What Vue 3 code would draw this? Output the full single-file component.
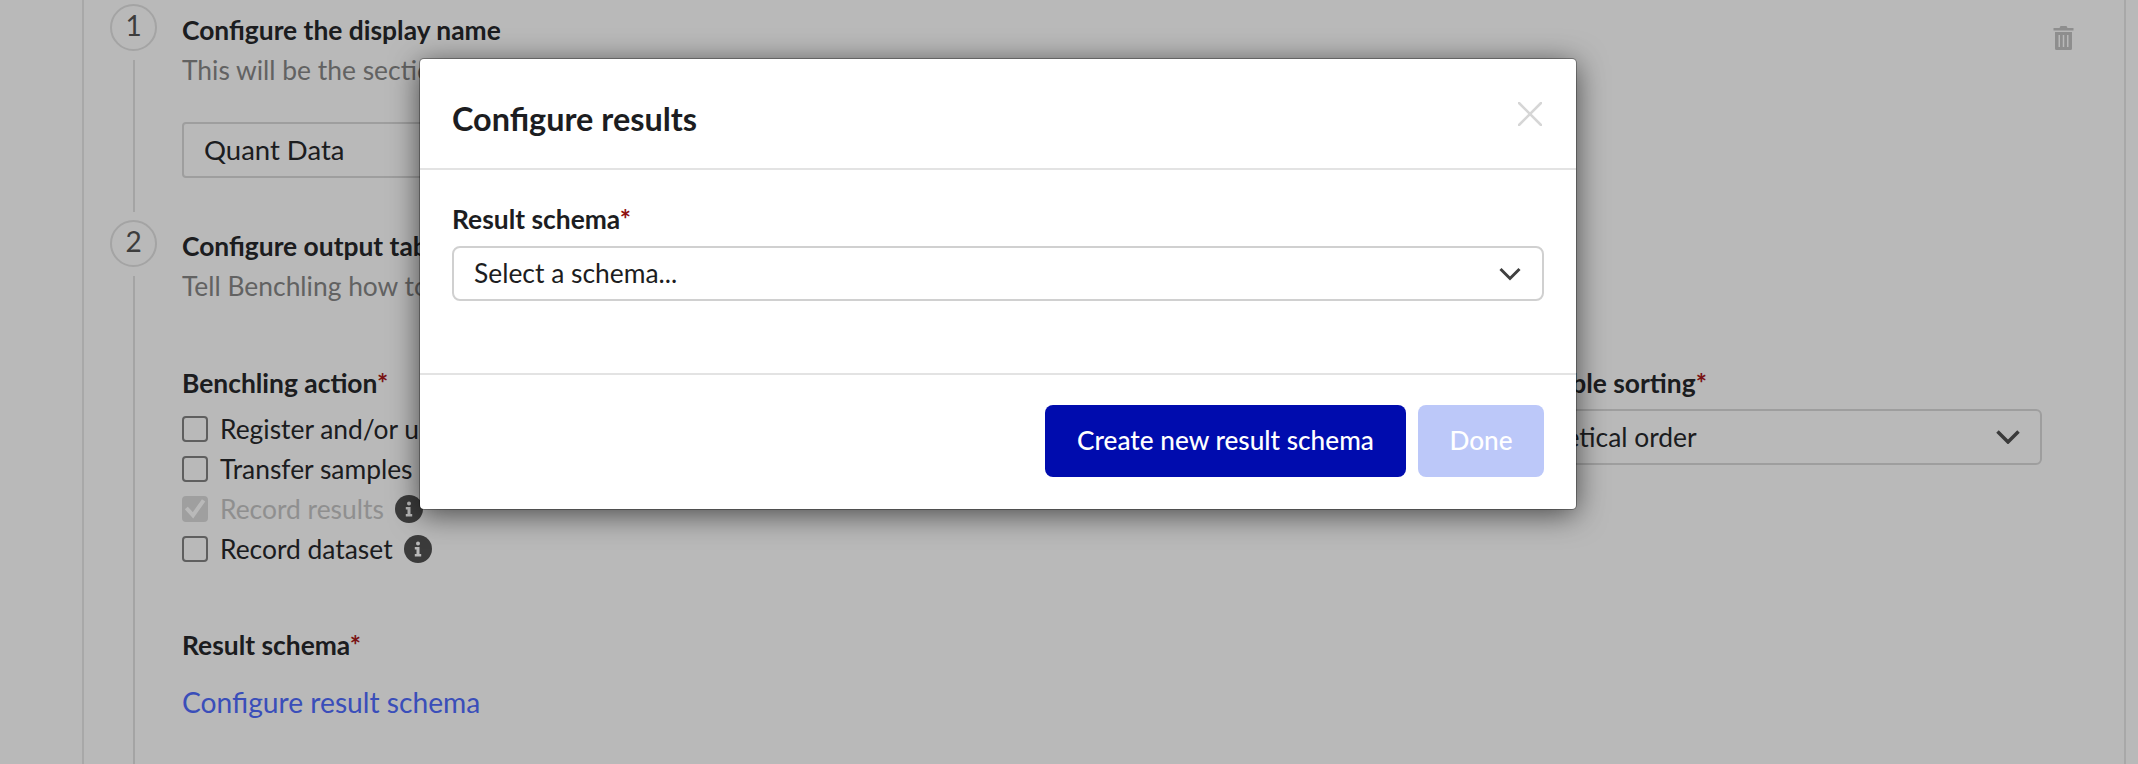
<template>
  <div class="page">
    <div class="card">
      <section class="step">
        <div class="rail">
          <div class="num">1</div>
          <div class="line line-short"></div>
        </div>
        <div class="body">
          <div class="title">Configure the display name</div>
          <div class="desc">This will be the section</div>
          <div class="input">Quant Data</div>
        </div>
        <svg class="trash" viewBox="0 0 20 24" width="21" height="24">
          <path d="M7 0h6l1 2h6v2.500H0V2h6z" fill="#c4c4c4" />
          <path fill-rule="evenodd" d="M1.500 6h17v16.500a1.500 1.500 0 0 1-1.500 1.500H3a1.500 1.500 0 0 1-1.500-1.500zM5 9v12h1.500V9zm4.250 0v12h1.500V9zM13.500 9v12H15V9z" fill="#c4c4c4" />
        </svg>
      </section>

      <section class="step step-two">
        <div class="rail">
          <div class="num">2</div>
          <div class="line"></div>
        </div>
        <div class="body">
          <div class="title">Configure output table</div>
          <div class="desc">Tell Benchling how to</div>

          <div class="form-row">
            <div class="col">
              <div class="label">Benchling action<span class="req">*</span></div>
              <div class="checks">
                <label v-for="item in actions" :key="item.text" class="check" :class="{ disabled: item.checked }">
                  <span class="box">
                    <svg v-if="item.checked" viewBox="0 0 26 26" width="26" height="26">
                      <path d="M4.300 12l6.700 7.300L21.600 4.300" fill="none" stroke="#fff" stroke-width="4" />
                    </svg>
                  </span>
                  <span class="check-text">{{ item.text }}</span>
                  <svg v-if="item.info" class="info" viewBox="0 0 28 28" width="28" height="28">
                    <circle cx="14" cy="14" r="14" fill="#525252" />
                    <circle cx="14" cy="8.500" r="2" fill="#fff" />
                    <path d="M10.800 12h4.700v7h1.700v2.500h-6.400V19h1.700v-4.500h-1.700z" fill="#fff" />
                  </svg>
                </label>
              </div>
              <div class="label schema-label">Result schema<span class="req">*</span></div>
              <a class="link">Configure result schema</a>
            </div>

            <div class="col col-right">
              <div class="label sort-label">Output table sorting<span class="req">*</span></div>
              <div class="input sort-select">
                <span>Alphabetical order</span>
                <svg viewBox="0 0 24 14" width="24" height="14">
                  <path d="M1.500 1.500L12 12 22.500 1.500" fill="none" stroke="#525252" stroke-width="3.500" />
                </svg>
              </div>
            </div>
          </div>
        </div>
      </section>
    </div>

    <div class="overlay"></div>

    <div class="modal">
      <header class="modal-head">
        <h2>Configure results</h2>
        <svg class="close" viewBox="0 0 24 24" width="24" height="24">
          <path d="M1 1l22 22M23 1L1 23" fill="none" stroke="#d6d6d6" stroke-width="2.500" stroke-linecap="round" />
        </svg>
      </header>
      <div class="modal-body">
        <div class="label modal-label">Result schema<span class="req req-modal">*</span></div>
        <div class="modal-select">
          <span>Select a schema...</span>
          <svg viewBox="0 0 22 14" width="22" height="14">
            <path d="M1.500 2L11 11.500 20.500 2" fill="none" stroke="#404040" stroke-width="3" />
          </svg>
        </div>
      </div>
      <footer class="modal-foot">
        <button class="btn btn-primary">Create new result schema</button>
        <button class="btn btn-disabled">Done</button>
      </footer>
    </div>
  </div>
</template>

<script setup>
const actions = [
  { text: 'Register and/or update', checked: false, info: false },
  { text: 'Transfer samples', checked: false, info: false },
  { text: 'Record results', checked: true, info: true },
  { text: 'Record dataset', checked: false, info: true }
]
</script>

<style>
html,
body {
  margin: 0;
  background: #fff;
}
</style>

<style scoped>
.page {
  position: relative;
  width: 2138px;
  height: 764px;
  overflow: hidden;
  background: #fff;
  font-family: Lato, "Liberation Sans", sans-serif;
  font-size: 26.4px;
  line-height: 32px;
  color: #27282c;
}

.card {
  box-sizing: border-box;
  width: 2044px;
  height: 764px;
  margin-left: 82px;
  padding-top: 4px;
  border-left: 2px solid #e8e8e8;
  border-right: 2px solid #e8e8e8;
}

.step {
  display: flex;
  padding-left: 26px;
  height: 216px;
}

.step-two {
  height: 560px;
  padding-right: 82px;
}

.rail {
  display: flex;
  flex-direction: column;
  align-items: center;
  width: 47px;
  margin-right: 25px;
  flex: none;
}

.num {
  box-sizing: border-box;
  width: 47px;
  height: 47px;
  border: 2px solid #e2e2e2;
  border-radius: 50%;
  text-align: center;
  line-height: 38px;
  font-size: 28px;
  color: #555;
}

.line {
  flex: 1;
  width: 2px;
  margin-top: 9px;
  background: #e2e2e2;
}

.line-short {
  margin-bottom: 8px;
}

.body {
  flex: 1;
  min-width: 0;
  padding-top: 10px;
}

.title {
  font-weight: 700;
}

.desc {
  margin-top: 8px;
  color: #888;
}

.input {
  box-sizing: border-box;
  width: 560px;
  height: 56px;
  margin-top: 36px;
  padding: 0 20px;
  border: 2px solid #dadada;
  border-radius: 4px;
  font-size: 27.5px;
  line-height: 52px;
}

.trash {
  flex: none;
  margin: 22px 50px 0 13px;
}

.form-row {
  display: flex;
  justify-content: space-between;
  margin-top: 65px;
}

.col-right {
  width: 580px;
}

.label {
  font-weight: 700;
}

.sort-label {
  margin-left: -6px;
}

.req {
  color: #a81a1a;
}

.checks {
  display: flex;
  flex-direction: column;
  gap: 14px;
  margin-top: 17px;
}

.check {
  display: flex;
  align-items: center;
  height: 26px;
}

.box {
  box-sizing: border-box;
  width: 26px;
  height: 26px;
  margin-right: 12px;
  border: 2px solid #838383;
  border-radius: 4px;
  flex: none;
}

.box svg {
  display: block;
  margin: -2px;
}

.disabled .box {
  border-color: #dcdcdc;
  background: #dcdcdc;
}

.disabled .check-text {
  color: #c6c6c6;
}

.info {
  margin-left: 11px;
  flex: none;
}

.schema-label {
  margin-top: 67px;
}

.link {
  display: block;
  margin-top: 25px;
  font-size: 28.2px;
  color: #506cff;
}

.sort-select {
  display: flex;
  align-items: center;
  justify-content: space-between;
  width: 580px;
  margin-top: 10px;
  padding-right: 20px;
  border-radius: 6px;
  font-size: 26.4px;
}

.overlay {
  position: absolute;
  inset: 0;
  background: rgba(0, 0, 0, 0.275);
}

.modal {
  position: absolute;
  left: 420px;
  top: 59px;
  box-sizing: border-box;
  width: 1156px;
  height: 450px;
  background: #fff;
  border-radius: 4px;
  color: #1c1d21;
  box-shadow: 0 0 0 1px rgba(0, 0, 0, 0.3), 0 5px 30px rgba(0, 0, 0, 0.62);
}

.modal-head {
  box-sizing: border-box;
  display: flex;
  align-items: center;
  justify-content: space-between;
  height: 111px;
  padding: 0 34px 0 32px;
  border-bottom: 2px solid #e3e3e3;
}

.modal-head h2 {
  margin: 10px 0 0;
  font-size: 32.4px;
  font-weight: 700;
  line-height: 40px;
}

.close {
  flex: none;
}

.modal-body {
  box-sizing: border-box;
  height: 203px;
  padding: 33px 32px 0 32px;
}

.modal-label {
  margin-bottom: 11px;
}

.req-modal {
  color: #8e1010;
}

.modal-select {
  box-sizing: border-box;
  display: flex;
  align-items: center;
  justify-content: space-between;
  height: 55px;
  padding: 0 21px 0 20px;
  border: 2px solid #d0d0d0;
  border-radius: 8px;
}

.modal-select span {
  margin-top: -2px;
}

.modal-foot {
  box-sizing: border-box;
  display: flex;
  justify-content: flex-end;
  gap: 12px;
  height: 136px;
  padding: 30px 32px 0 0;
  border-top: 2px solid #e3e3e3;
}

.btn {
  height: 72px;
  padding: 0 0 3px;
  border: none;
  border-radius: 8px;
  font-family: inherit;
  font-size: 26.2px;
  font-weight: 500;
  color: #fff;
}

.btn-primary {
  width: 361px;
  background: #000cae;
}

.btn-disabled {
  width: 126px;
  background: #bcc8f9;
}
</style>
